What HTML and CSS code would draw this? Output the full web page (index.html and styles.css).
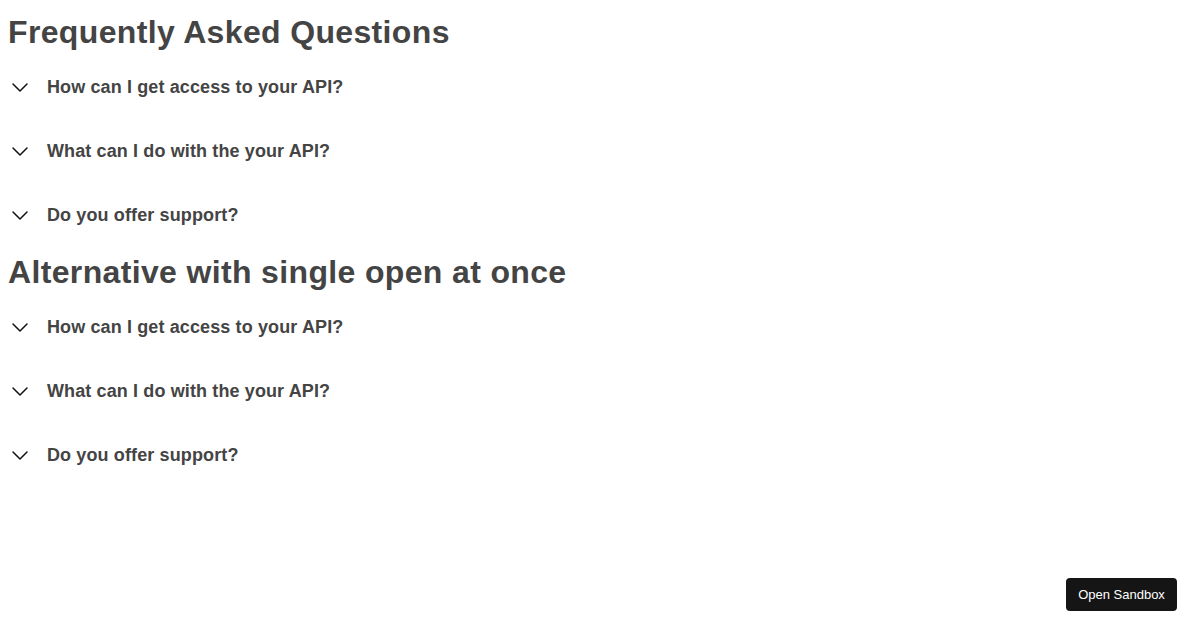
FILE: index.html
```html
<!DOCTYPE html>
<html lang="en">
<head>
<meta charset="utf-8">
<title>FAQ</title>
<link rel="stylesheet" href="styles.css">
</head>
<body>
  <section class="faq">
    <h1 class="faq-title">Frequently Asked Questions</h1>
    <div class="faq-item">
      <svg class="chevron" viewBox="0 0 24 24" width="24" height="24"><path d="M5 9l7 7 7-7"/></svg>
      <span class="faq-q">How can I get access to your API?</span>
    </div>
    <div class="faq-item">
      <svg class="chevron" viewBox="0 0 24 24" width="24" height="24"><path d="M5 9l7 7 7-7"/></svg>
      <span class="faq-q">What can I do with the your API?</span>
    </div>
    <div class="faq-item">
      <svg class="chevron" viewBox="0 0 24 24" width="24" height="24"><path d="M5 9l7 7 7-7"/></svg>
      <span class="faq-q">Do you offer support?</span>
    </div>
  </section>
  <section class="faq">
    <h2 class="faq-title">Alternative with single open at once</h2>
    <div class="faq-item">
      <svg class="chevron" viewBox="0 0 24 24" width="24" height="24"><path d="M5 9l7 7 7-7"/></svg>
      <span class="faq-q">How can I get access to your API?</span>
    </div>
    <div class="faq-item">
      <svg class="chevron" viewBox="0 0 24 24" width="24" height="24"><path d="M5 9l7 7 7-7"/></svg>
      <span class="faq-q">What can I do with the your API?</span>
    </div>
    <div class="faq-item">
      <svg class="chevron" viewBox="0 0 24 24" width="24" height="24"><path d="M5 9l7 7 7-7"/></svg>
      <span class="faq-q">Do you offer support?</span>
    </div>
  </section>
  <button class="sandbox-btn">Open Sandbox</button>
</body>
</html>
```
FILE: styles.css
```css
html, body {
  background: #ffffff;
}
body {
  margin: 8px;
  font-family: "Liberation Sans", Arial, sans-serif;
  color: #444444;
}
.faq-title {
  margin: 0;
  font-size: 32px;
  font-weight: bold;
  line-height: 48px;
  letter-spacing: 0.35px;
  color: #444444;
}
.faq-item {
  box-sizing: border-box;
  height: 64px;
  padding-top: 21px;
  display: flex;
  align-items: flex-start;
}
.chevron {
  flex: none;
  margin-top: -2px;
  fill: none;
  stroke: #111111;
  stroke-width: 1.5;
  stroke-linecap: round;
  stroke-linejoin: round;
}
.faq-q {
  margin-left: 15px;
  font-size: 18px;
  font-weight: bold;
  line-height: 20.7px;
  letter-spacing: 0.12px;
  color: #444444;
}
.sandbox-btn {
  position: fixed;
  right: 23px;
  bottom: 19px;
  width: 111px;
  height: 33px;
  padding: 0;
  border: none;
  border-radius: 4px;
  background: #151515;
  color: #ffffff;
  font-family: "Liberation Sans", Arial, sans-serif;
  font-size: 13px;
}
```
